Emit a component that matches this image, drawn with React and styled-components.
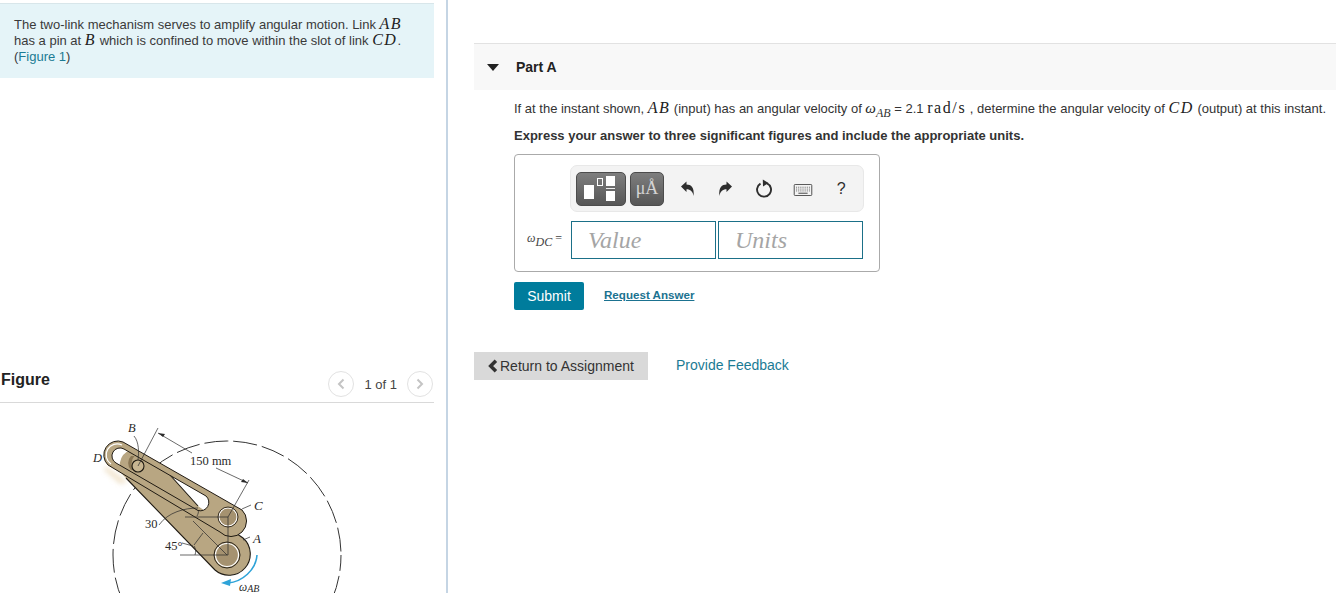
import styled, { createGlobalStyle } from "styled-components";

const GlobalStyle = createGlobalStyle`
  html, body {
    margin: 0;
    height: 593px;
    overflow: hidden;
    background: #fff;
  }
  body {
    font-family: "Liberation Sans", Arial, sans-serif;
    font-size: 14px;
    color: #333;
  }
`;

const Page = styled.div`
  display: flex;
  height: 593px;
  overflow: hidden;
`;

const LeftPane = styled.div`
  flex: none;
  width: 446px;
  height: 593px;
  border-right: 2px solid #c5d5e4;
`;

const Intro = styled.div`
  width: 434px;
  margin-top: 3px;
  height: 75px;
  box-sizing: border-box;
  padding: 13px 20px 0 14px;
  background: #e5f4f8;
  border-top: 1px solid #d8e6ea;
  font-size: 13px;
  line-height: 16px;
  color: #3a3a3a;
`;

const Math = styled.span`
  font-family: "Liberation Serif", "Times New Roman", serif;
  font-style: italic;
  font-size: 16px;
  line-height: 0;
  letter-spacing: 1.5px;
  color: #222;
`;

const Omega = styled(Math)`
  font-size: 15px;
  letter-spacing: 0;
`;

const Roman = styled.span`
  font-family: "Liberation Serif", "Times New Roman", serif;
  font-size: 16px;
  line-height: 0;
  letter-spacing: 1.6px;
  color: #222;
`;

const Sub = styled.sub`
  font-family: "Liberation Serif", "Times New Roman", serif;
  font-style: italic;
  font-size: 12px;
  line-height: 0;
  vertical-align: -4px;
`;

const Link = styled.a`
  color: #1b7b94;
  text-decoration: none;
`;

const FigureHeader = styled.div`
  display: flex;
  align-items: center;
  justify-content: space-between;
  width: 432px;
  height: 50px;
  margin-top: 274px;
  padding: 0 1px 0 1px;
  border-bottom: 1px solid #d9d9d9;
`;

const FigureTitle = styled.h2`
  margin: 5px 0 0;
  font-size: 16px;
  font-weight: bold;
  color: #222;
`;

const Pager = styled.div`
  display: flex;
  align-items: center;
  gap: 10px;
  font-size: 13px;
  color: #444;
  margin-top: 14px;
`;

const PagerButton = styled.span`
  display: flex;
  align-items: center;
  justify-content: center;
  width: 24px;
  height: 24px;
  border: 1px solid #e2e2e2;
  border-radius: 50%;
  color: #c4c4c4;
`;

const Figure = styled.svg`
  display: block;
  width: 446px;
  height: 190px;
`;

const RightPane = styled.div`
  flex: 1;
  min-width: 0;
  padding: 43px 0 0 26px;
`;

const PartHeader = styled.div`
  display: flex;
  align-items: center;
  height: 46px;
  padding-left: 13px;
  background: #f8f8f8;
  border-top: 1px solid #e2e2e2;
  font-weight: bold;
  font-size: 14px;
  color: #222;
`;

const Caret = styled.span`
  width: 0;
  height: 0;
  border-left: 6px solid transparent;
  border-right: 6px solid transparent;
  border-top: 7px solid #222;
  margin-right: 17px;
`;

const PartBody = styled.div`
  padding-left: 40px;
`;

const Question = styled.p`
  margin: 10px 0 0;
  height: 18px;
  font-size: 13px;
  line-height: 18px;
  white-space: nowrap;
  color: #333;
`;

const Instruction = styled.p`
  margin: 9px 0 0;
  height: 18px;
  font-size: 13px;
  line-height: 18px;
  font-weight: bold;
  color: #333;
`;

const AnswerBox = styled.div`
  width: 366px;
  height: 118px;
  box-sizing: border-box;
  margin-top: 9px;
  border: 1px solid #aaa;
  border-radius: 4px;
  padding: 10px 16px 0 10px;
`;

const Toolbar = styled.div`
  display: flex;
  align-items: center;
  width: 294px;
  height: 47px;
  box-sizing: border-box;
  margin-left: 45px;
  padding: 0 5px;
  background: #f3f3f3;
  border: 1px solid #e8e8e8;
  border-radius: 7px;
`;

const ToolGroup = styled.div`
  display: flex;
  gap: 4px;
`;

const ToolButton = styled.button`
  display: flex;
  align-items: center;
  justify-content: center;
  width: ${(p) => p.$width}px;
  height: 34px;
  padding: 0;
  border: 1px solid #4c4c4c;
  border-radius: 5px;
  background: linear-gradient(#7e7e7e, #565656);
  color: #d4d4d4;
  font-family: "Liberation Serif", serif;
  font-size: 18px;
`;

const ToolIcon = styled.span`
  display: flex;
  align-items: center;
  justify-content: center;
  width: 38.5px;
  height: 34px;
  color: #2e2e2e;
  font-size: 16px;
`;

const ToolIcons = styled.div`
  display: flex;
  margin-left: 4px;
`;

const KeyboardSvg = styled.svg`
  margin-top: 3px;
`;

const AnswerRow = styled.div`
  display: flex;
  align-items: center;
  gap: 2px;
  margin-top: 9px;
`;

const AnswerLabel = styled.span`
  flex: none;
  width: 44px;
  margin-top: -3px;
  padding-right: 7px;
  box-sizing: border-box;
  text-align: right;
  font-family: "Liberation Serif", serif;
  font-size: 12px;
  color: #444;
  white-space: nowrap;
`;

const AnswerInput = styled.div`
  flex: none;
  width: 145px;
  height: 38px;
  box-sizing: border-box;
  padding-left: 16px;
  line-height: 36px;
  border: 1px solid #1b7088;
  font-family: "Liberation Serif", serif;
  font-style: italic;
  font-size: 24px;
  color: #a5a5a5;
`;

const Actions = styled.div`
  display: flex;
  align-items: center;
  gap: 20px;
  margin-top: 10px;
`;

const SubmitButton = styled.button`
  width: 70px;
  height: 28px;
  padding: 0;
  border: none;
  border-radius: 2px;
  background: #007c9c;
  color: #fff;
  font-family: inherit;
  font-size: 14px;
`;

const RequestLink = styled.a`
  margin-top: -4px;
  color: #1b7290;
  font-size: 11.6px;
  font-weight: bold;
  text-decoration: underline;
`;

const Footer = styled.div`
  display: flex;
  align-items: center;
  margin: 42px 0 0 -40px;
`;

const ReturnButton = styled.button`
  display: flex;
  align-items: center;
  gap: 0;
  width: 174px;
  height: 28px;
  padding: 0 0 0 12px;
  border: none;
  background: #d9d9d9;
  color: #333;
  font-family: inherit;
  font-size: 14px;
`;

const FeedbackLink = styled(Link)`
  margin: -2px 0 0 28px;
`;

const Chevron = ({ dir, size = 12, weight = 2 }) => (
  <svg width={size} height={size} viewBox="0 0 12 12" fill="none">
    <path
      d={dir === "left" ? "M8.5 1.5 4 6l4.5 4.5" : "M3.5 1.5 8 6l-4.5 4.5"}
      stroke="currentColor"
      strokeWidth={weight}
    />
  </svg>
);

const TemplateIcon = () => (
  <svg width="48" height="32" viewBox="0 0 48 32">
    <rect x="7" y="12" width="10" height="14" fill="#fff" />
    <rect x="20.5" y="5.5" width="5" height="7" fill="none" stroke="#fff" />
    <rect x="29" y="3" width="9" height="10" fill="#fff" />
    <rect x="29" y="15" width="9" height="1" fill="#eee" />
    <rect x="29" y="18" width="9" height="10" fill="#fff" />
  </svg>
);

const Undo = ({ flip }) => (
  <svg width="15" height="16" viewBox="0 0 15 16" style={flip ? { transform: "scaleX(-1)" } : undefined}>
    <path d="M1 5.5 6.5 0.5V3.6C11 3.6 14.5 6.5 13.6 15 12.8 10.5 10.5 8.2 6.5 8.2V11Z" fill="#2e2e2e" />
  </svg>
);

const ResetIcon = () => (
  <svg width="18" height="20" viewBox="0 0 18 20" fill="none">
    <path d="M5.5 4.6A7 7 0 1 0 12 4.3" stroke="#2e2e2e" strokeWidth="1.9" />
    <path d="M7.8 0.5 13.5 4 8 7.5Z" fill="#2e2e2e" />
  </svg>
);

const KeyboardIcon = () => (
  <KeyboardSvg width="20" height="12" viewBox="0 0 20 13">
    <rect x="0.5" y="0.5" width="19" height="12" rx="1" fill="#f3f3f3" stroke="#444" />
    <path d="M2.5 3.5h15M2.5 5.5h15M2.5 7.5h15" stroke="#666" strokeDasharray="1 1" />
    <path d="M5 10h10" stroke="#555" strokeWidth="1.2" />
  </KeyboardSvg>
);

// page coordinates, so the numbers can be read straight off the screenshot
const Mechanism = () => (
  <Figure viewBox="0 403 446 190">
    <defs>
      <filter id="soft" x="-10%" y="-10%" width="120%" height="120%">
        <feGaussianBlur stdDeviation="0.35" />
      </filter>
      <filter id="glow" x="-30%" y="-30%" width="160%" height="160%">
        <feGaussianBlur stdDeviation="2.5" />
      </filter>
    </defs>
    <g filter="url(#soft)">
      <circle cx="227" cy="555" r="114" fill="none" stroke="#333" strokeWidth="1" strokeDasharray="24 5" strokeDashoffset="8" />
      <path d="M106 466 L128 482 L120 484 L104 470Z" fill="#e8d3ae" opacity="0.6" filter="url(#glow)" />

      {/* link AB, outlined only where it shows past link CD */}
      <path d="M131 450 L150 463 L170 475 L198 506 L243 538 A19 19 0 0 1 215 570 L126 478 A16 16 0 0 1 131 450Z" fill="#b8a682" />
      <path
        d="M170 475 L198 506 M220 522 L243 538 A19 19 0 0 1 215 570 L126 478"
        fill="none"
        stroke="#1f1a12"
        strokeWidth="1.1"
      />
      <path d="M131 456a10 10 0 0 0 0 14l3.5 0a10 10 0 0 1 0-14Z" fill="#8a7754" />
      <circle cx="227" cy="555" r="11.5" fill="#a59270" stroke="#fff" strokeWidth="1.2" />
      <circle cx="227" cy="555" r="13" fill="none" stroke="#2a241a" strokeWidth="1" />

      {/* link CD with its slot */}
      <path
        fillRule="evenodd"
        d="M123 442 L242 510 A15.5 15.5 0 0 1 220 532 L108 465 A14 14 0 0 1 123 442Z
           M124 449 A8 8 0 0 0 116 463 L198 510.5 A8.5 8.5 0 0 0 206 496Z"
        fill="#b8a682"
        stroke="#1f1a12"
        strokeWidth="1"
      />
      <path d="M122 445 A11 11 0 0 0 111 464" fill="none" stroke="#fff" strokeWidth="1.2" />
      <circle cx="228" cy="517" r="9" fill="#a59270" stroke="#fff" strokeWidth="1.1" />
      <circle cx="228" cy="517" r="10" fill="none" stroke="#2a241a" strokeWidth="0.9" />
      <circle cx="138" cy="466" r="6" fill="#c7b591" stroke="#1f1a12" strokeWidth="1.1" />

      {/* dimension lines */}
      <g fill="none" stroke="#2a2a2a" strokeWidth="0.7">
        <path d="M138 466 L158 428" />
        <path d="M158 433 L192 453" />
        <path d="M216 468 L248 483" />
        <path d="M228 517 L249 480" />
        <path d="M134 436 C139 442 139 452 138 460" />
        <path d="M185 517 H228 V555 H180" />
        <path d="M193 521 L227 555" />
        <path d="M242 509 L251 505" />
        <path d="M243 540 L250 537" />
        <path d="M159 525 C168 512 185 508 198 508" />
        <path d="M198 510 C199 512 198 514 197 516" />
        <path d="M194 545 L203 533" />
        <path d="M193 546 L182 543" />
        <path d="M194 546 C196 549 196 552 195 555" />
      </g>
      <path d="M158 433 l7 1 l-2 3Z M248 483 l-7 -1 l2 -3Z" fill="#2a2a2a" />
      <path d="M257 555 C256 570 242 582 228 583" fill="none" stroke="#2ea3d8" strokeWidth="1.6" />
      <path d="M221 583 L231 579 L230 586Z" fill="#2ea3d8" />
    </g>
    <g fontFamily="'Liberation Serif', serif" fontSize="12.5" fill="#2a2a2a">
      <text x="128" y="432" fontStyle="italic">B</text>
      <text x="93" y="462" fontStyle="italic">D</text>
      <text x="190" y="465">150 mm</text>
      <text x="254" y="510" fontStyle="italic" fontSize="13">C</text>
      <text x="253" y="543" fontStyle="italic" fontSize="13">A</text>
      <text x="145" y="528">30</text>
      <text x="165" y="550">45°</text>
      <text x="239" y="591" fontStyle="italic" fontSize="11.5">
        ω<tspan dy="1" fontSize="10">AB</tspan>
      </text>
    </g>
  </Figure>
);

const App = () => (
  <>
    <GlobalStyle />
    <Page>
      <LeftPane>
        <Intro>
          The two-link mechanism serves to amplify angular motion. Link <Math>AB</Math> has a pin at <Math>B</Math> which is
          confined to move within the slot of link <Math>CD</Math>.
          <br />
          (<Link>Figure 1</Link>)
        </Intro>
        <FigureHeader>
          <FigureTitle>Figure</FigureTitle>
          <Pager>
            <PagerButton>
              <Chevron dir="left" />
            </PagerButton>
            1 of 1
            <PagerButton>
              <Chevron dir="right" />
            </PagerButton>
          </Pager>
        </FigureHeader>
        <Mechanism />
      </LeftPane>
      <RightPane>
        <PartHeader>
          <Caret />
          Part A
        </PartHeader>
        <PartBody>
          <Question>
            If at the instant shown, <Math>AB</Math> (input) has an angular velocity of <Omega>ω</Omega>
            <Sub>AB</Sub> = 2.1 <Roman>rad/s</Roman> , determine the angular velocity of <Math>CD</Math> (output) at this
            instant.
          </Question>
          <Instruction>Express your answer to three significant figures and include the appropriate units.</Instruction>
          <AnswerBox>
            <Toolbar>
              <ToolGroup>
                <ToolButton $width={50}>
                  <TemplateIcon />
                </ToolButton>
                <ToolButton $width={34}>μÅ</ToolButton>
              </ToolGroup>
              <ToolIcons>
                <ToolIcon>
                  <Undo />
                </ToolIcon>
                <ToolIcon>
                  <Undo flip />
                </ToolIcon>
                <ToolIcon>
                  <ResetIcon />
                </ToolIcon>
                <ToolIcon>
                  <KeyboardIcon />
                </ToolIcon>
                <ToolIcon>?</ToolIcon>
              </ToolIcons>
            </Toolbar>
            <AnswerRow>
              <AnswerLabel>
                <i>ω</i>
                <Sub>DC</Sub> =
              </AnswerLabel>
              <AnswerInput>Value</AnswerInput>
              <AnswerInput>Units</AnswerInput>
            </AnswerRow>
          </AnswerBox>
          <Actions>
            <SubmitButton>Submit</SubmitButton>
            <RequestLink>Request Answer</RequestLink>
          </Actions>
          <Footer>
            <ReturnButton>
              <Chevron dir="left" size={14} weight={3} />
              Return to Assignment
            </ReturnButton>
            <FeedbackLink>Provide Feedback</FeedbackLink>
          </Footer>
        </PartBody>
      </RightPane>
    </Page>
  </>
);

export default App;
